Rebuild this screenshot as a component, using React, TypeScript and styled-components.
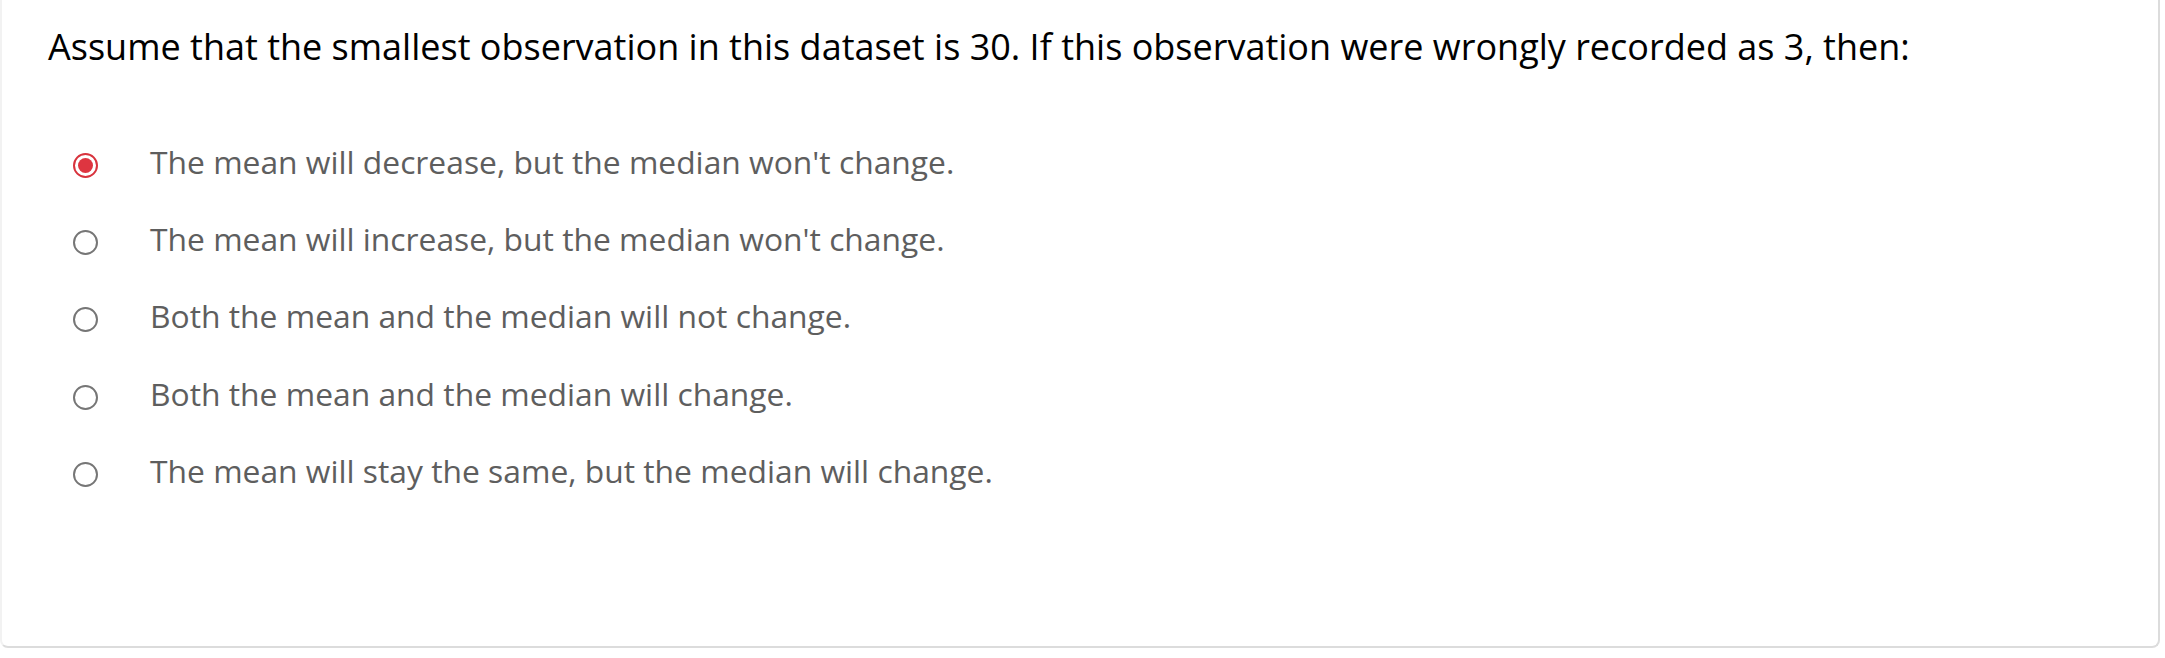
import React, { useState } from "react";
import styled, { createGlobalStyle } from "styled-components";

const GlobalStyle = createGlobalStyle`
  html, body {
    margin: 0;
    padding: 0;
    background: #fff;
  }
  body {
    font-family: "Open Sans", "Liberation Sans", sans-serif;
  }
`;

const Card = styled.div`
  box-sizing: border-box;
  width: 2160px;
  height: 648px;
  background: #fff;
  border: 2px solid #dcdcdc;
  border-top: 0;
  border-left-color: #f2f2f2;
  border-radius: 0 0 8px 8px;
  padding: 22px 0 0 0;
`;

const Question = styled.div`
  font-family: "Open Sans", sans-serif;
  font-size: 36px;
  line-height: 50px;
  color: #000;
  padding-left: 46px;
  margin-bottom: 51px;
`;

const Choices = styled.div`
  display: flex;
  flex-direction: column;
  padding-left: 71px;
`;

const Choice = styled.label`
  display: flex;
  align-items: flex-start;
  gap: 52px;
  padding: 16.7px 0;
  cursor: pointer;
`;

const Radio = styled.span<{ $checked?: boolean }>`
  box-sizing: border-box;
  flex: none;
  width: 25px;
  height: 25px;
  margin-top: 13px;
  border-radius: 50%;
  border: 2px solid ${({ $checked }) => ($checked ? "#d8333d" : "#767676")};
  display: flex;
  align-items: center;
  justify-content: center;

  &::after {
    content: "";
    width: 15px;
    height: 15px;
    border-radius: 50%;
    background: #de3540;
    display: ${({ $checked }) => ($checked ? "block" : "none")};
  }
`;

const ChoiceText = styled.span`
  font-family: "Open Sans", sans-serif;
  font-size: 31.8px;
  line-height: 44px;
  color: #5e5e5e;
`;

const options = [
  "The mean will decrease, but the median won't change.",
  "The mean will increase, but the median won't change.",
  "Both the mean and the median will not change.",
  "Both the mean and the median will change.",
  "The mean will stay the same, but the median will change.",
];

export default function App() {
  const [picked, setPicked] = useState(0);

  return (
    <>
      <GlobalStyle />
      <Card>
        <Question>
          Assume that the smallest observation in this dataset is 30. If this
          observation were wrongly recorded as 3, then:
        </Question>
        <Choices>
          {options.map((o, i) => (
            <Choice key={i} onClick={() => setPicked(i)}>
              <Radio $checked={picked === i} />
              <ChoiceText>{o}</ChoiceText>
            </Choice>
          ))}
        </Choices>
      </Card>
    </>
  );
}
